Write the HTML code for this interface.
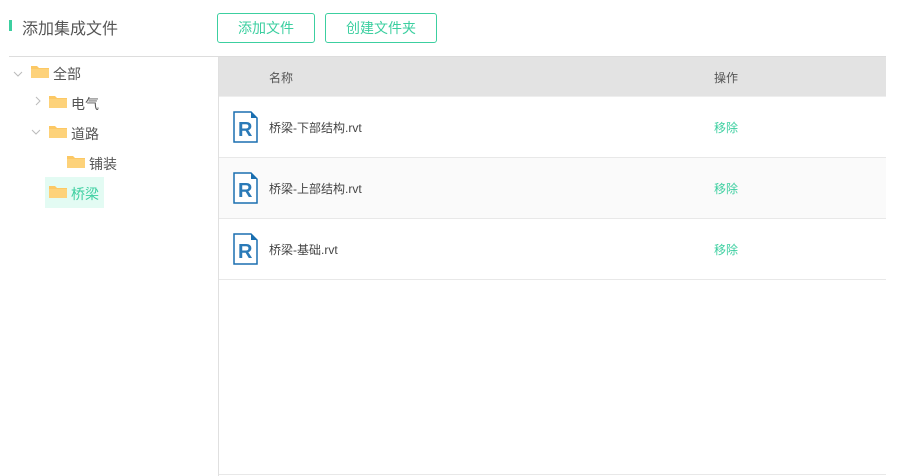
<!DOCTYPE html><html><head><meta charset="utf-8"><style>
body{margin:0;width:906px;height:476px;background:#fff;font-family:"Liberation Sans","Noto Sans CJK SC",sans-serif;position:relative;overflow:hidden;color:#555}
.a{position:absolute}
.btn{position:absolute;top:13px;height:28px;border:1px solid #3ccfa0;border-radius:3px;color:#3ccfa0;font-size:14px;line-height:28px;text-align:center;box-sizing:content-box}
.t{position:absolute;font-size:14px;color:#555}
.row{position:absolute;left:219px;width:667px;height:60px;border-bottom:1px solid #e8e8e8}
.row .n{position:absolute;left:50px;top:22px;font-size:12px;color:#444}
.row .o{position:absolute;left:495px;top:22px;font-size:12px;color:#3ccfa0}
.ic{position:absolute;left:14px;top:14px}
</style></head><body>
<div class="a" style="left:9px;top:20px;width:3px;height:11px;background:#3ccfa0"></div>
<div class="a" style="left:22px;top:15px;font-size:16px;color:#555">添加集成文件</div>
<div class="btn" style="left:217px;width:96px">添加文件</div>
<div class="btn" style="left:325px;width:110px">创建文件夹</div>
<div class="a" style="left:9px;top:56px;width:877px;height:1px;background:#ddd"></div>
<div class="a" style="left:218px;top:57px;width:1px;height:419px;background:#e0e0e0"></div>
<div class="a" style="left:219px;top:474px;width:667px;height:1px;background:#e8e8e8"></div>
<svg class="a" style="left:0;top:0" width="220" height="210">
<defs><g id="f"><path d="M0 2h6l2 2h10v10H0z" fill="#fcc864"/><path d="M0 5h18v9H0z" fill="#fdd27a"/></g></defs>
<path d="M14 72l4 4 4-4" fill="none" stroke="#bbb"/>
<path d="M36 97l4 4-4 4" fill="none" stroke="#bbb"/>
<path d="M32 130l4 4 4-4" fill="none" stroke="#bbb"/>
<use href="#f" x="31" y="64"/><use href="#f" x="49" y="94"/><use href="#f" x="49" y="124"/><use href="#f" x="67" y="154"/>
<rect x="45" y="177" width="59" height="31" fill="#e3fbf3"/>
<use href="#f" x="49" y="184"/>
</svg>
<div class="t" style="left:53px;top:64px">全部</div>
<div class="t" style="left:71px;top:94px">电气</div>
<div class="t" style="left:71px;top:124px">道路</div>
<div class="t" style="left:89px;top:154px">铺装</div>
<div class="t" style="left:71px;top:184px;color:#3ccfa0">桥梁</div>
<div class="a" style="left:219px;top:57px;width:667px;height:39px;background:#e3e3e3;border-bottom:1px solid #eee"></div>
<div class="a" style="left:269px;top:69px;font-size:12px;color:#555">名称</div>
<div class="a" style="left:714px;top:69px;font-size:12px;color:#555">操作</div>
<div class="row" style="top:97px"><svg class="ic" width="26" height="32"><path d="M1 1h17l6 6v24H1z" fill="#fff" stroke="#1a6fb0" stroke-width="1.5"/><path d="M18 1v6h6z" fill="#1a6fb0"/><text x="5" y="25" font-family="Liberation Sans" font-weight="bold" font-size="20" fill="#2a7ab8">R</text></svg><span class="n">桥梁-下部结构.rvt</span><span class="o">移除</span></div>
<div class="row" style="top:158px;background:#fafafa"><svg class="ic" width="26" height="32"><path d="M1 1h17l6 6v24H1z" fill="#fff" stroke="#1a6fb0" stroke-width="1.5"/><path d="M18 1v6h6z" fill="#1a6fb0"/><text x="5" y="25" font-family="Liberation Sans" font-weight="bold" font-size="20" fill="#2a7ab8">R</text></svg><span class="n">桥梁-上部结构.rvt</span><span class="o">移除</span></div>
<div class="row" style="top:219px"><svg class="ic" width="26" height="32"><path d="M1 1h17l6 6v24H1z" fill="#fff" stroke="#1a6fb0" stroke-width="1.5"/><path d="M18 1v6h6z" fill="#1a6fb0"/><text x="5" y="25" font-family="Liberation Sans" font-weight="bold" font-size="20" fill="#2a7ab8">R</text></svg><span class="n">桥梁-基础.rvt</span><span class="o">移除</span></div>
</body></html>
